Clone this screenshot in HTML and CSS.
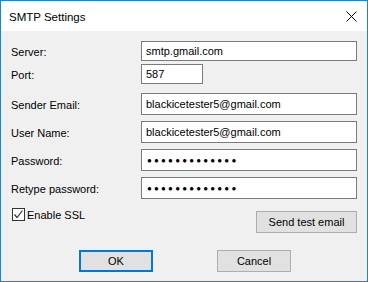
FILE: index.html
```html
<!DOCTYPE html>
<html>
<head>
<meta charset="utf-8">
<link rel="stylesheet" href="styles.css">
</head>
<body>
<div class="window">
  <div class="titlebar">
    <span class="title">SMTP Settings</span>
    <svg class="close" width="11" height="11" viewBox="0 0 11 11"><path d="M0.5 0.5 L10.5 10.5 M10.5 0.5 L0.5 10.5" stroke="#000" stroke-width="1" fill="none"/></svg>
  </div>
  <div class="content">
    <div class="fields">
      <div class="row r-server"><label class="lbl">Server:</label><input class="box h20" type="text" value="smtp.gmail.com" readonly></div>
      <div class="row r-port"><label class="lbl">Port:</label><input class="box h20 port" type="text" value="587" readonly></div>
      <div class="row r-sender"><label class="lbl">Sender Email:</label><input class="box" type="text" value="blackicetester5@gmail.com" readonly></div>
      <div class="row r-user"><label class="lbl">User Name:</label><input class="box" type="text" value="blackicetester5@gmail.com" readonly></div>
      <div class="row r-pass"><label class="lbl">Password:</label><input class="box dots" type="text" value="●●●●●●●●●●●●●" readonly></div>
      <div class="row r-retype"><label class="lbl">Retype password:</label><input class="box dots" type="text" value="●●●●●●●●●●●●●" readonly></div>
    </div>
    <div class="ssl-row">
      <div class="check">
        <span class="cb"><svg width="11" height="11" viewBox="0 0 11 11"><path d="M1.5 5.5 L4 8.5 L9.5 1.5" stroke="#333" stroke-width="1.2" fill="none"/></svg></span>
        <span class="cb-text">Enable SSL</span>
      </div>
      <button class="btn send">Send test email</button>
    </div>
    <div class="actions">
      <button class="btn ok">OK</button>
      <button class="btn cancel">Cancel</button>
    </div>
  </div>
</div>
</body>
</html>
```
FILE: styles.css
```css
html, body {
  margin: 0;
  padding: 0;
}
body {
  font-family: "Liberation Sans", Arial, sans-serif;
  font-size: 11px;
  color: #000;
}
.window {
  width: 368px;
  height: 282px;
  box-sizing: border-box;
  border: 1px solid #1883d7;
  display: flex;
  flex-direction: column;
  background: #f0f0f0;
}
.titlebar {
  height: 30px;
  background: #fff;
  display: flex;
  align-items: center;
  justify-content: space-between;
  padding: 0 10px 0 8px;
  flex: none;
}
.title {
  font-size: 11.5px;
  margin-top: 1px;
}
.close {
  display: block;
}
.content {
  flex: 1;
  padding: 10px 0 0 10px;
}
.fields {
  display: flex;
  flex-direction: column;
}
.row {
  display: flex;
  align-items: center;
}
.r-port { margin-top: 3px; }
.r-sender { margin-top: 9px; }
.r-user { margin-top: 6px; }
.r-pass { margin-top: 6px; }
.r-retype { margin-top: 6px; }
.lbl {
  width: 130px;
  flex: none;
  padding-top: 2px;
}
.box {
  width: 216px;
  height: 22px;
  box-sizing: border-box;
  border: 1px solid #7a7a7a;
  background: #fff;
  padding: 0 4px;
  margin: 0;
  font-family: "Liberation Sans", Arial, sans-serif;
  font-size: 11px;
  color: #000;
  outline: none;
}
.box.h20 { height: 20px; }
.box.port { width: 62px; }
.box.dots {
  font-size: 8px;
  letter-spacing: 2.2px;
  padding-left: 5px;
}
.ssl-row {
  display: flex;
  align-items: flex-start;
  justify-content: space-between;
  margin-top: 9px;
  width: 346px;
}
.check {
  display: flex;
  align-items: center;
  margin-left: 1px;
}
.cb {
  width: 13px;
  height: 13px;
  box-sizing: border-box;
  border: 1px solid #333;
  background: #fff;
  display: flex;
  align-items: center;
  justify-content: center;
}
.cb svg { display: block; }
.cb-text {
  margin-left: 2px;
}
.btn {
  height: 22px;
  box-sizing: border-box;
  border: 1px solid #adadad;
  background: #e1e1e1;
  font-family: "Liberation Sans", Arial, sans-serif;
  font-size: 11px;
  color: #000;
  padding: 0;
  margin: 0;
}
.send {
  width: 101px;
  margin-top: 3px;
}
.actions {
  display: flex;
  gap: 64px;
  margin-top: 17px;
  padding-left: 68px;
}
.ok, .cancel {
  width: 74px;
}
.ok {
  border: 2px solid #0078d7;
}
```
